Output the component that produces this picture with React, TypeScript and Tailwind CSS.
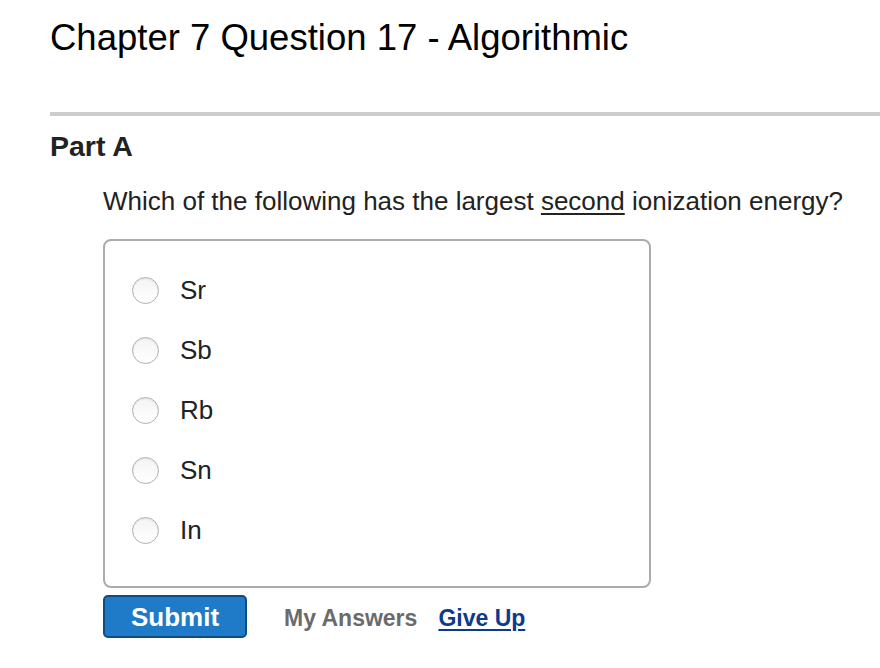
const options = ["Sr", "Sb", "Rb", "Sn", "In"];

function Radio() {
  return (
    <span className="block w-[27px] h-[27px] rounded-full border-[1.5px] border-[#b0b0b0] bg-gradient-to-b from-[#f4f4f4] to-white shadow-[inset_0_1px_2px_rgba(0,0,0,0.08)] shrink-0" />
  );
}

export default function App() {
  return (
    <div className="min-h-[668px] bg-white pl-[50px] font-['Liberation_Sans',Arial,sans-serif]">
      {/* Title */}
      <h1 className="pt-[16px] text-[36.5px] leading-[44px] text-black">
        Chapter 7 Question 17 - Algorithmic
      </h1>

      <div className="mt-[52px] h-[4px] bg-[#cccccc]" />

      {/* Part A */}
      <h2 className="mt-[14px] text-[28.5px] leading-[32px] font-bold text-[#222]">Part A</h2>

      <div className="pl-[53px]">
        <p className="mt-[24px] text-[26px] leading-[30px] text-[#222]">
          Which of the following has the largest <span className="underline underline-offset-[3px] decoration-[1.5px]">second</span> ionization energy?
        </p>

        <div className="mt-[23px] w-[548px] h-[349px] rounded-[8px] border-2 border-[#acacac] pl-[27px] pt-[19px]">
          {options.map((o) => (
            <label key={o} className="flex items-center h-[60px] gap-[21px] cursor-pointer">
              <Radio />
              <span className="text-[26px] leading-[30px] text-[#222]">{o}</span>
            </label>
          ))}
        </div>

        <div className="mt-[7px] flex items-center">
          <button className="w-[144px] h-[43px] rounded-[5px] border-2 border-[#0f4c80] bg-[#1f7ac7] text-white text-[26px] font-bold leading-none">
            Submit
          </button>
          <span className="ml-[37px] pt-[4px] text-[23px] font-bold text-[#6b6b6b]">My Answers</span>
          <a className="ml-[21px] pt-[4px] text-[23px] font-bold text-[#0c3a8f] underline underline-offset-[3px] decoration-2">
            Give Up
          </a>
        </div>
      </div>
    </div>
  );
}
